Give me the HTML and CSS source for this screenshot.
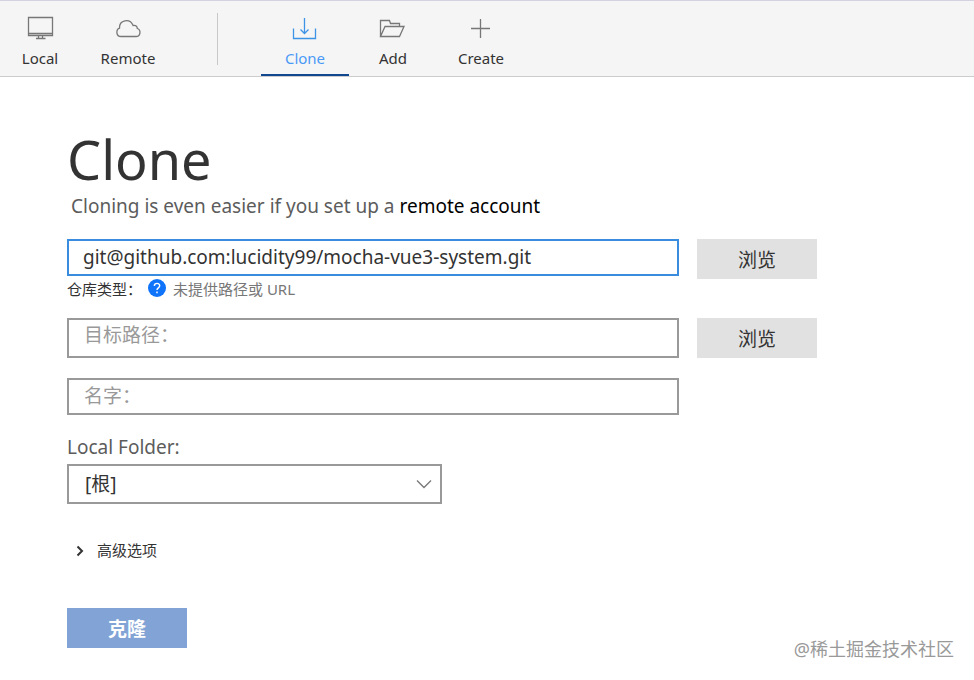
FILE: index.html
```html
<!DOCTYPE html>
<html lang="zh-CN">
<head>
<meta charset="utf-8">
<meta name="viewport" content="width=device-width, initial-scale=1">
<title>Clone</title>
<link rel="stylesheet" href="styles.css">
</head>
<body>
<header class="toolbar">
  <nav class="group">
    <button type="button" class="tab">
      <svg class="icon" viewBox="0 0 28 28"><path d="M2.500 3.500H26.500V21.500H2.500ZM2.500 19.500H26.500M12.500 21.500V24M16.500 21.500V24M10 24.500H19.500"/></svg>
      <span>Local</span>
    </button>
    <button type="button" class="tab">
      <svg class="icon" viewBox="0 0 28 28"><path d="M7 22.500C1.800 22.500 1.800 15.500 5.500 14.200C5 5.500 16 4 19.100 11.500C22.500 11 23.300 13 23.300 14.500C27.500 16 26.500 22.500 22 22.500Z"/></svg>
      <span>Remote</span>
    </button>
  </nav>
  <div class="divider"></div>
  <nav class="group">
    <button type="button" class="tab active" aria-current="page">
      <svg class="icon" viewBox="0 0 28 28"><path d="M2.500 14.500V24.500H24.500V14.500M13.500 4V19M9.500 15.500L13.500 19.500L17.500 15.500"/></svg>
      <span>Clone</span>
    </button>
    <button type="button" class="tab">
      <svg class="icon" viewBox="0 0 28 28"><path d="M1.500 22.500V6.500H10.500L11.500 9.500H20.500V12.500M1.500 22.500L6 12.500H25L20.500 22.500Z"/></svg>
      <span>Add</span>
    </button>
    <button type="button" class="tab">
      <svg class="icon" viewBox="0 0 28 28"><path d="M13.500 5V24M4 14.500H23"/></svg>
      <span>Create</span>
    </button>
  </nav>
</header>
<main class="page">
  <h1>Clone</h1>
  <p class="intro">Cloning is even easier if you set up a <a href="#remote">remote account</a></p>
  <form class="form">
    <div class="row">
      <input class="field source" type="text" aria-label="源路径" value="git@github.com:lucidity99/mocha-vue3-system.git">
      <button type="button" class="browse">浏览</button>
    </div>
    <p class="status">
      <span class="kind">仓库类型：</span>
      <svg class="help" viewBox="0 0 20 20"><circle cx="10" cy="10" r="10"/><path d="M7 7.600C7.200 3.900 13 4 13 7.500C13 9.800 10 9.800 10 12.200M10 14V15.800"/></svg>
      <span>未提供路径或 URL</span>
    </p>
    <div class="row">
      <input class="field target" type="text" aria-label="目标路径" placeholder="目标路径：">
      <button type="button" class="browse">浏览</button>
    </div>
    <div class="row">
      <input class="field name" type="text" aria-label="名字" placeholder="名字：">
    </div>
    <label class="label" for="folder">Local Folder:</label>
    <div class="select">
      <select id="folder"><option>[根]</option></select>
      <svg class="arrow" viewBox="0 0 16 10"><path d="M1 1.500L8 8.500L15 1.500"/></svg>
    </div>
    <button type="button" class="advanced" aria-expanded="false">
      <svg class="chevron" viewBox="0 0 8 12"><path d="M1.500 1.500L6 6L1.500 10.500"/></svg>
      <span>高级选项</span>
    </button>
    <button type="submit" class="submit" disabled>克隆</button>
  </form>
</main>
<footer class="credit">@稀土掘金技术社区</footer>
</body>
</html>
```
FILE: styles.css
```css
* {
  box-sizing: border-box;
}

body {
  position: relative;
  min-height: 100vh;
  margin: 0;
  background: #fff;
  color: #333;
  font-family: "Noto Sans", "Noto Sans CJK SC", sans-serif;
  font-size: 15px;
}

h1,
p {
  margin: 0;
}

button,
input,
select {
  padding: 0;
  border: 0;
  border-radius: 0;
  background: none;
  color: inherit;
  font: inherit;
}

svg {
  flex: none;
  fill: none;
}

.toolbar {
  display: flex;
  height: 77px;
  border-top: 1px solid #d4d2e0;
  border-bottom: 1px solid #ccc;
  background: #f5f5f5;
}

.group {
  display: flex;
}

.group:first-child {
  margin-left: -4px;
}

.tab {
  display: flex;
  flex-direction: column;
  align-items: center;
  width: 88px;
  padding-top: 13px;
  border-bottom: 2px solid transparent;
  line-height: 20px;
}

.icon {
  width: 28px;
  height: 28px;
  margin-bottom: 6px;
  stroke: #777;
  stroke-width: 1.3;
}

.active {
  border-bottom-color: #11478f;
  color: #4a9af5;
}

.active .icon {
  stroke: #3d94e6;
}

.divider {
  width: 1px;
  margin: 12px 43px 11px 45px;
  background: #c8c8c8;
}

.page {
  padding: 47px 67px 32px;
}

h1 {
  font-size: 54px;
  font-weight: 400;
  line-height: 70px;
}

.intro {
  padding-left: 4px;
  color: #5c5c5c;
  font-size: 19px;
  line-height: 24px;
}

.intro a {
  color: #000;
  text-decoration: none;
}

.form {
  display: flex;
  flex-direction: column;
  align-items: flex-start;
  max-width: 750px;
  padding-top: 21px;
}

.row {
  display: grid;
  grid-template-columns: minmax(0, 1fr) 120px;
  column-gap: 18px;
  align-items: start;
  width: 100%;
}

.field {
  width: 100%;
  height: 37px;
  padding: 0 15px 2px;
  border: 2px solid #999;
  font-size: 19px;
}

.field::placeholder {
  color: #999;
  opacity: 1;
}

.source {
  padding-left: 14px;
  border-color: #3a8dde;
}

.target {
  height: 40px;
  padding-bottom: 6px;
}

.target,
.name {
  margin-bottom: 20px;
}

.browse {
  height: 40px;
  background: #e1e1e1;
  font-size: 19px;
}

.status {
  display: flex;
  align-items: center;
  height: 20px;
  margin-bottom: 19px;
  color: #777;
  line-height: 20px;
}

.kind {
  width: 81px;
  color: #333;
}

.help {
  width: 18px;
  height: 18px;
  margin: 0 7px 2px 0;
  fill: #0f74fa;
}

.help path {
  fill: none;
  stroke: #fff;
  stroke-width: 1.6;
}

.label {
  margin-bottom: 4px;
  color: #5c5c5c;
  font-size: 19px;
  line-height: 25px;
}

.select {
  position: relative;
  width: 50%;
}

.select select {
  width: 100%;
  height: 40px;
  padding-left: 16px;
  border: 2px solid #999;
  appearance: none;
  font-size: 19px;
}

.arrow {
  position: absolute;
  top: 15px;
  right: 10px;
  width: 16px;
  height: 10px;
  stroke: #777;
  stroke-width: 1.3;
  pointer-events: none;
}

.advanced {
  display: flex;
  gap: 13px;
  align-items: center;
  margin: 36px 0 47px 9px;
  line-height: 21px;
}

.chevron {
  width: 8px;
  height: 12px;
  stroke: #333;
  stroke-width: 2;
}

.submit {
  width: 120px;
  height: 40px;
  background: #82a3d5;
  color: #fff;
  font-size: 19px;
  font-weight: 700;
}

.credit {
  position: absolute;
  right: 20px;
  bottom: 18px;
  color: #999;
  font-size: 18px;
  line-height: 26px;
}
```
